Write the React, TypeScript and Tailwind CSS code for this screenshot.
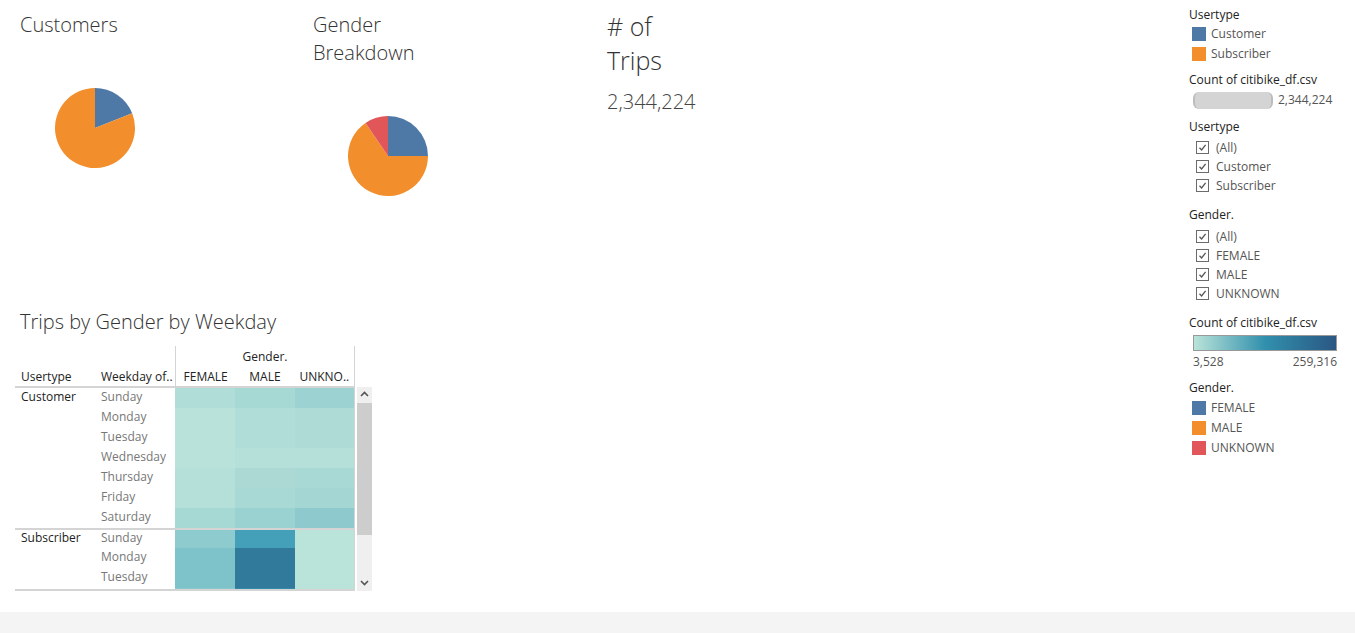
import React from 'react';

const FONT = { fontFamily: '"Open Sans", "Liberation Sans", sans-serif' };

type Slice = { value: number; color: string };

// simple pie drawn clockwise from 12 o'clock
function Pie({ slices, r = 40 }: { slices: Slice[]; r?: number }) {
  const total = slices.reduce((s, x) => s + x.value, 0);
  let acc = 0;
  const pt = (f: number) => {
    const a = f * Math.PI * 2;
    return [r + r * Math.sin(a), r - r * Math.cos(a)];
  };
  return (
    <svg width={r * 2} height={r * 2} viewBox={`0 0 ${r * 2} ${r * 2}`}>
      {slices.map((s, i) => {
        const f0 = acc / total;
        acc += s.value;
        const f1 = acc / total;
        const [x0, y0] = pt(f0);
        const [x1, y1] = pt(f1);
        const large = f1 - f0 > 0.5 ? 1 : 0;
        return (
          <path
            key={i}
            d={`M${r},${r} L${x0},${y0} A${r},${r} 0 ${large} 1 ${x1},${y1} Z`}
            fill={s.color}
          />
        );
      })}
    </svg>
  );
}

const BLUE = '#4e79a7';
const ORANGE = '#f28e2b';
const RED = '#e15759';

function Check() {
  return (
    <span className="w-[13px] h-[13px] border border-[#6b6b6b] bg-white flex items-center justify-center">
      <svg width="9" height="9" viewBox="0 0 9 9">
        <path d="M1.5 4.8 L3.6 7 L7.6 1.8" stroke="#555" strokeWidth="1.3" fill="none" />
      </svg>
    </span>
  );
}

function CheckRow({ label }: { label: string }) {
  return (
    <div className="flex items-center gap-[7px] h-[19px] pl-[7px]">
      <Check />
      <span className="text-[12px] text-[#555]">{label}</span>
    </div>
  );
}

function Swatch({ color, label }: { color: string; label: string }) {
  return (
    <div className="flex items-center gap-[5px] h-[20px] pl-[3px]">
      <span className="w-[14px] h-[14px]" style={{ background: color }} />
      <span className="text-[12px] text-[#555]">{label}</span>
    </div>
  );
}

function LegendTitle({ children, className = '' }: { children: React.ReactNode; className?: string }) {
  return <div className={`text-[12px] text-[#222] ${className}`}>{children}</div>;
}

const heat: { user: string; day: string; f: string; m: string; u: string }[] = [
  { user: 'Customer', day: 'Sunday', f: '#b0ddd7', m: '#a6d9d4', u: '#9cd3d2' },
  { user: '', day: 'Monday', f: '#b8e2da', m: '#b0ddd7', u: '#afdbd6' },
  { user: '', day: 'Tuesday', f: '#b8e2da', m: '#b0ddd7', u: '#afdbd6' },
  { user: '', day: 'Wednesday', f: '#b8e2da', m: '#b5e0d9', u: '#b5e0d9' },
  { user: '', day: 'Thursday', f: '#b5e0d9', m: '#add9d5', u: '#a9d9d5' },
  { user: '', day: 'Friday', f: '#b5e0d9', m: '#a9d9d5', u: '#a4d6d3' },
  { user: '', day: 'Saturday', f: '#a6d9d4', m: '#9ad2d1', u: '#8ecacd' },
  { user: 'Subscriber', day: 'Sunday', f: '#8ecbcf', m: '#44a0b8', u: '#bae3d9' },
  { user: '', day: 'Monday', f: '#7fc3ca', m: '#327a9c', u: '#bae3d9' },
  { user: '', day: 'Tuesday', f: '#7fc3ca', m: '#327a9c', u: '#bae3d9' },
];

function Heatmap() {
  return (
    <div className="flex">
      <div className="w-[340px]">
        {/* header */}
        <div className="flex h-[40px]">
          <div className="w-[160px] flex items-end text-[12px] text-[#222]">
            <span className="w-[80px] pl-[6px]">Usertype</span>
            <span className="w-[80px] pl-[6px] whitespace-nowrap">Weekday of..</span>
          </div>
          <div className="w-[180px] border-l border-r border-[#d4d4d4] flex flex-col text-[12px] text-[#222]">
            <div className="h-[20px] flex items-end justify-center">Gender.</div>
            <div className="h-[20px] flex items-end">
              <span className="w-[60px] text-center">FEMALE</span>
              <span className="w-[60px] text-center">MALE</span>
              <span className="w-[60px] text-center">UNKNO..</span>
            </div>
          </div>
        </div>
        {/* body */}
        <div className="border-t-2 border-b-2 border-[#d4d4d4] h-[205px] overflow-hidden">
          {heat.map((r, i) => {
            const sep = i === 7;
            return (
              <div key={i} className={`flex h-[20px] ${sep ? 'border-t-2 border-[#d4d4d4]' : ''}`}>
                <span className={`w-[80px] pl-[6px] text-[12px] text-[#222] ${sep ? 'leading-[16px]' : 'leading-[18px]'}`}>
                  {r.user}
                </span>
                <span className={`w-[80px] pl-[6px] text-[12px] text-[#777] ${sep ? 'leading-[16px]' : 'leading-[18px]'}`}>
                  {r.day}
                </span>
                <span className="w-[60px]" style={{ background: r.f }} />
                <span className="w-[60px]" style={{ background: r.m }} />
                <span className="w-[60px] border-r border-[#d4d4d4]" style={{ background: r.u }} />
              </div>
            );
          })}
          <div className="flex h-[20px]">
            <span className="w-[160px]" />
            <span className="w-[60px] bg-[#8ac8cd]" />
            <span className="w-[60px] bg-[#318aa9]" />
            <span className="w-[60px] bg-[#bae3d9]" />
          </div>
        </div>
      </div>
      {/* scrollbar */}
      <div className="mt-[41px] ml-[2px] w-[15px] h-[204px] bg-[#efefef] flex flex-col items-center">
        <svg width="15" height="16" viewBox="0 0 15 16">
          <path d="M4 9 L7.5 5.5 L11 9" stroke="#555" strokeWidth="1.6" fill="none" />
        </svg>
        <div className="w-[15px] h-[132px] bg-[#cdcdcd]" />
        <div className="flex-1" />
        <svg width="15" height="16" viewBox="0 0 15 16">
          <path d="M4 6 L7.5 9.5 L11 6" stroke="#555" strokeWidth="1.6" fill="none" />
        </svg>
      </div>
    </div>
  );
}

export default function App() {
  return (
    <div className="w-[1355px] h-[633px] bg-white flex flex-col" style={FONT}>
      <div className="flex flex-1">
        {/* main */}
        <div className="flex-1 flex flex-col">
          <div className="flex h-[300px] text-[#333]">
            <div className="w-[313px] pl-[20px] pt-[11px]">
              <div className="text-[20px] font-light leading-[28px]">Customers</div>
              <div className="mt-[49px] ml-[35px]">
                <Pie slices={[{ value: 19, color: BLUE }, { value: 81, color: ORANGE }]} />
              </div>
            </div>
            <div className="w-[294px] pt-[11px]">
              <div className="text-[20px] font-light leading-[28px]">
                Gender
                <br />
                Breakdown
              </div>
              <div className="mt-[49px] ml-[35px]">
                <Pie
                  slices={[
                    { value: 25, color: BLUE },
                    { value: 65.5, color: ORANGE },
                    { value: 9.5, color: RED },
                  ]}
                />
              </div>
            </div>
            <div className="pt-[9px]">
              <div className="text-[25px] font-light leading-[34px]">
                # of
                <br />
                Trips
              </div>
              <div className="mt-[10px] text-[20px] font-light text-[#444]">2,344,224</div>
            </div>
          </div>
          <div className="pl-[15px]">
            <div className="pl-[5px] text-[20px] font-light text-[#333] leading-[26px] mt-[9px]">
              Trips by Gender by Weekday
            </div>
            <div className="mt-[11px]">
              <Heatmap />
            </div>
          </div>
        </div>
        {/* legends */}
        <div className="w-[166px] pt-[6px] flex flex-col">
          <LegendTitle className="h-[18px]">Usertype</LegendTitle>
          <Swatch color={BLUE} label="Customer" />
          <Swatch color={ORANGE} label="Subscriber" />
          <LegendTitle className="mt-[7px] h-[19px]">Count of citibike_df.csv</LegendTitle>
          <div className="flex items-center mt-[1px] gap-[5px]">
            <span className="ml-[4px] w-[80px] h-[17px] rounded-[6px] bg-[#d4d4d4] border-l-2 border-r-2 border-[#bdbdbd]" />
            <span className="text-[12px] text-[#555]">2,344,224</span>
          </div>
          <LegendTitle className="mt-[9px] h-[20px]">Usertype</LegendTitle>
          <CheckRow label="(All)" />
          <CheckRow label="Customer" />
          <CheckRow label="Subscriber" />
          <LegendTitle className="mt-[11px] h-[21px]">Gender.</LegendTitle>
          <CheckRow label="(All)" />
          <CheckRow label="FEMALE" />
          <CheckRow label="MALE" />
          <CheckRow label="UNKNOWN" />
          <LegendTitle className="mt-[11px] h-[19px]">Count of citibike_df.csv</LegendTitle>
          <div className="mt-[2px] ml-[4px] w-[144px] h-[16px] border border-[#999] bg-[linear-gradient(to_right,#b9e3d9,#3190ad,#2a5783)]" />
          <div className="mt-[2px] ml-[4px] w-[144px] flex justify-between text-[12px] text-[#555] h-[18px]">
            <span>3,528</span>
            <span>259,316</span>
          </div>
          <LegendTitle className="mt-[8px] h-[19px]">Gender.</LegendTitle>
          <Swatch color={BLUE} label="FEMALE" />
          <Swatch color={ORANGE} label="MALE" />
          <Swatch color={RED} label="UNKNOWN" />
        </div>
      </div>
      <div className="h-[21px] bg-[#f4f4f4]" />
    </div>
  );
}
